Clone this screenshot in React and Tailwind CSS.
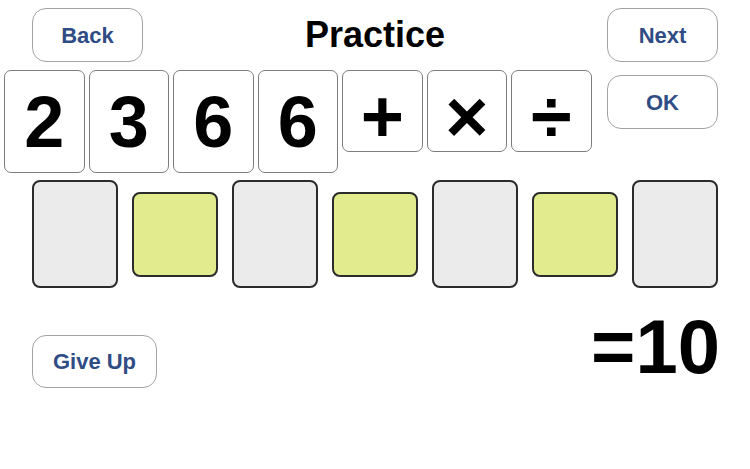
const tiles = [
  { label: "2", kind: "num" },
  { label: "3", kind: "num" },
  { label: "6", kind: "num" },
  { label: "6", kind: "num" },
  { label: "+", kind: "op" },
  { label: "×", kind: "op" },
  { label: "÷", kind: "op" },
];

const slots = ["num", "op", "num", "op", "num", "op", "num"];

function NavButton({ children, className = "" }) {
  return (
    <button
      className={`flex h-[54px] w-[111px] items-center justify-center rounded-[14px] border-[1.5px] border-[#a3a3a3] bg-white text-[22px] font-bold text-[#2f4c84] ${className}`}
    >
      {children}
    </button>
  );
}

export default function App() {
  return (
    <div
      className="h-[469px] w-[750px] overflow-hidden bg-white text-black"
      style={{ fontFamily: '"Liberation Sans", Arial, sans-serif' }}
    >
      {/* Header */}
      <div className="flex items-center justify-between px-[32px] pt-[8px]">
        <NavButton>Back</NavButton>
        <h1 className="text-[36px] font-bold leading-none">Practice</h1>
        <NavButton>Next</NavButton>
      </div>

      {/* Tiles + OK */}
      <div className="mt-[8px] flex items-start pl-[4px] pr-[32px]">
        <div className="flex items-start gap-[4px]">
          {tiles.map((t, i) => (
            <div
              key={i}
              className={`flex w-[80.5px] items-center justify-center rounded-[7px] border border-[#7d7d7d] bg-white font-bold leading-none ${
                t.kind === "num" ? "h-[103px] text-[72px]" : "h-[82px] pt-[12px] text-[74px]"
              }`}
            >
              {t.label}
            </div>
          ))}
        </div>
        <NavButton className="ml-auto mt-[5px]">OK</NavButton>
      </div>

      {/* Answer slots */}
      <div className="mt-[7px] flex h-[108px] items-center gap-[14px] pl-[32px]">
        {slots.map((s, i) => (
          <div
            key={i}
            className={`w-[86px] rounded-[8px] border-2 border-[#2b2b2b] ${
              s === "num" ? "h-[108px] bg-[#ebebeb]" : "h-[85px] bg-[#e2eb8e]"
            }`}
          />
        ))}
      </div>

      {/* Bottom row */}
      <div className="flex items-start justify-between pl-[32px] pr-[30px]">
        <button className="mt-[47px] flex h-[53px] w-[125px] items-center justify-center rounded-[14px] border-[1.5px] border-[#a3a3a3] bg-white text-[22px] font-bold text-[#2f4c84]">
          Give Up
        </button>
        <div className="mt-[21px] text-[76px] font-bold leading-none">=10</div>
      </div>
    </div>
  );
}
